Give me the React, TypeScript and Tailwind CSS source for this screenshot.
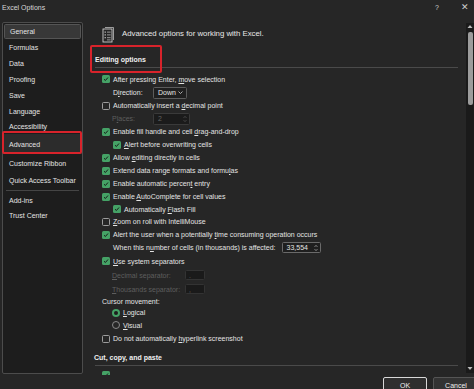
import type { ReactNode } from "react";

function Check({ on }: { on: boolean }) {
  if (!on) {
    return <span className="block h-[8px] w-[8px] shrink-0 rounded-[1.5px] border border-[#9c9c9c]" />;
  }
  return (
    <span className="flex h-[8px] w-[8px] shrink-0 items-center justify-center rounded-[1.5px] bg-[#45a266]">
      <svg width="6" height="6" viewBox="0 0 12 12" aria-hidden="true">
        <path d="M2 6.4 L4.8 9 L10 3" fill="none" stroke="#111" strokeWidth="1.8" />
      </svg>
    </span>
  );
}

function Radio({ on }: { on: boolean }) {
  return on ? (
    <span className="flex h-[8px] w-[8px] shrink-0 items-center justify-center rounded-full bg-[#45a266]">
      <span className="h-[4px] w-[4px] rounded-full bg-[#1d1d1d]" />
    </span>
  ) : (
    <span className="block h-[8px] w-[8px] shrink-0 rounded-full border border-[#8a8a8a]" />
  );
}

function Spin({ dim }: { dim?: boolean }) {
  const c = dim ? "#555" : "#aaa";
  return (
    <svg width="4" height="8" viewBox="0 0 4 8" aria-hidden="true" className="ml-auto mr-[2px]">
      <path d="M0.5 3 L2 1.3 L3.5 3" fill="none" stroke={c} strokeWidth="0.7" />
      <path d="M0.5 5 L2 6.7 L3.5 5" fill="none" stroke={c} strokeWidth="0.7" />
    </svg>
  );
}

// one line of the options list; heights follow the screenshot row spacing
function Row({ h, pl, children }: { h: string; pl: string; children: ReactNode }) {
  return <div className={`flex items-center gap-[3px] ${h} ${pl}`}>{children}</div>;
}

const navItems = [
  { label: "General", cls: "h-[15px] mx-[1px] mt-[1px] bg-[#383838] border border-[#555] rounded-[1.5px] pl-[5px]" },
  { label: "Formulas", cls: "h-[16px] pl-[6px]" },
  { label: "Data", cls: "h-[16px] pl-[6px]" },
  { label: "Proofing", cls: "h-[16px] pl-[6px]" },
  { label: "Save", cls: "h-[16px] pl-[6px]" },
  { label: "Language", cls: "h-[16px] pl-[6px]" },
  { label: "Accessibility", cls: "h-[15px] pl-[6px]" },
  { label: "Advanced", cls: "h-[20px] pl-[6px] bg-[#2c2c2c]" },
  { label: "Customize Ribbon", cls: "h-[18px] pl-[6px]" },
  { label: "Quick Access Toolbar", cls: "h-[17px] pl-[6px]" },
];

export default function App() {
  return (
    <div
      className="relative h-[389px] w-[474px] overflow-hidden bg-[#262626] text-[7px] leading-none text-[#e4e4e4]"
      style={{ fontFamily: '"Liberation Sans", Arial, sans-serif' }}
    >
      {/* Title bar */}
      <div className="flex h-[22px] items-start pt-[4px]">
        <span className="pl-[2px] text-[#d6d6d6]">Excel Options</span>
        <span className="ml-auto mr-[22px] text-[7px] text-[#cfcfcf]">?</span>
        <span className="mr-[5px] mt-[-1px] text-[9px] text-[#cfcfcf]">✕</span>
      </div>

      <div className="flex h-[353px]">
        {/* Left navigation */}
        <nav className="ml-[2px] h-[352px] w-[81px] shrink-0 rounded-[2px] border border-[#4c4c4c] bg-[#1d1d1d]">
          {navItems.map((item) => (
            <div key={item.label} className={`flex items-center ${item.cls}`}>
              {item.label}
            </div>
          ))}
          <div className="mx-[3px] my-[1px] h-px bg-[#454545]" />
          <div className="flex h-[16px] items-center pl-[6px]">Add-ins</div>
          <div className="flex h-[15px] items-center pl-[6px]">Trust Center</div>
        </nav>

        {/* Main options */}
        <main className="relative h-[353px] flex-1 overflow-hidden">
          <div className="flex h-[24px] items-center gap-[7px] pl-[19px]">
            <svg width="13" height="17" viewBox="0 0 13 17" aria-hidden="true">
              <path d="M3 1.5 H11.5 V14" fill="none" stroke="#bdbdbd" strokeWidth="0.8" />
              <rect x="1" y="3" width="9" height="13" fill="none" stroke="#cfcfcf" strokeWidth="0.9" />
              <rect x="2.6" y="5.5" width="1.2" height="1.2" fill="#cfcfcf" />
              <rect x="2.6" y="8.3" width="1.2" height="1.2" fill="#cfcfcf" />
              <rect x="2.6" y="11.1" width="1.2" height="1.2" fill="#cfcfcf" />
              <path d="M5 6.1 H8.6 M5 8.9 H8.6 M5 11.7 H8.6 M5 13.9 H8.6" stroke="#cfcfcf" strokeWidth="0.7" />
            </svg>
            <span className="text-[7.8px] text-[#e8e8e8]">Advanced options for working with Excel.</span>
          </div>

          <div className="mt-[6px] flex h-[14px] items-center pl-[12px] font-bold text-[#f0f0f0]">Editing options</div>
          <div className="ml-[12px] mr-[8px] mt-[1px] h-px bg-[#4a4a4a]" />

          <div className="mt-[4px]">
            <Row h="h-[14px]" pl="pl-[19px]">
              <Check on />
              <span>After pressing Enter, <u>m</u>ove selection</span>
            </Row>
            <Row h="h-[13px]" pl="pl-[30px]">
              <span className="w-[37px]">D<u>i</u>rection:</span>
              <span className="flex h-[12px] w-[34px] items-center rounded-[1.5px] border border-[#5c5c5c] bg-[#1f1f1f] pl-[4px]">
                Down
                <svg width="5" height="3" viewBox="0 0 5 3" className="ml-auto mr-[3px]" aria-hidden="true">
                  <path d="M0.5 0.5 L2.5 2.5 L4.5 0.5" fill="none" stroke="#cfcfcf" strokeWidth="0.8" />
                </svg>
              </span>
            </Row>
            <Row h="h-[13px]" pl="pl-[19px]">
              <Check on={false} />
              <span>Automatically insert a <u>d</u>ecimal point</span>
            </Row>
            <Row h="h-[13px]" pl="pl-[29px]">
              <span className="w-[38px] text-[#5e5e5e]">P<u>l</u>aces:</span>
              <span className="flex h-[12px] w-[37px] items-center rounded-[1.5px] border border-[#3a3a3a] bg-[#1b1b1b] pl-[4px] text-[#616161]">
                2
                <Spin dim />
              </span>
            </Row>
            <Row h="h-[13px]" pl="pl-[19px]">
              <Check on />
              <span>Enable fill handle and cell <u>d</u>rag-and-drop</span>
            </Row>
            <Row h="h-[13px]" pl="pl-[30px]">
              <Check on />
              <span><u>A</u>lert before overwriting cells</span>
            </Row>
            <Row h="h-[13px]" pl="pl-[19px]">
              <Check on />
              <span>Allow <u>e</u>diting directly in cells</span>
            </Row>
            <Row h="h-[13px]" pl="pl-[19px]">
              <Check on />
              <span>Extend data range formats and formu<u>l</u>as</span>
            </Row>
            <Row h="h-[13px]" pl="pl-[19px]">
              <Check on />
              <span>Enable automatic percen<u>t</u> entry</span>
            </Row>
            <Row h="h-[13px]" pl="pl-[19px]">
              <Check on />
              <span>Enable <u>A</u>utoComplete for cell values</span>
            </Row>
            <Row h="h-[12px]" pl="pl-[30px]">
              <Check on />
              <span>Automatically <u>F</u>lash Fill</span>
            </Row>
            <Row h="h-[13px]" pl="pl-[19px]">
              <Check on={false} />
              <span><u>Z</u>oom on roll with IntelliMouse</span>
            </Row>
            <Row h="h-[13px]" pl="pl-[19px]">
              <Check on />
              <span>Alert the user when a potentially <u>t</u>ime consuming operation occurs</span>
            </Row>
            <Row h="h-[13px]" pl="pl-[30px]">
              <span className="mr-[3px]">When this n<u>u</u>mber of cells (in thousands) is affected:</span>
              <span className="flex h-[11px] w-[39px] items-center rounded-[1.5px] border border-[#6a6a6a] bg-[#1f1f1f] pl-[4px]">
                33,554
                <Spin />
              </span>
            </Row>
            <Row h="h-[14px]" pl="pl-[19px]">
              <Check on />
              <span><u>U</u>se system separators</span>
            </Row>
            <Row h="h-[14px]" pl="pl-[29px]">
              <span className="w-[70px] text-[#5e5e5e]"><u>D</u>ecimal separator:</span>
              <span className="flex h-[10px] w-[20px] items-center rounded-[1.5px] border border-[#333] bg-[#1a1a1a] pl-[3px] text-[#5a5a5a]">.</span>
            </Row>
            <Row h="h-[14px]" pl="pl-[29px]">
              <span className="w-[70px] text-[#5e5e5e]"><u>T</u>housands separator:</span>
              <span className="flex h-[10px] w-[20px] items-center rounded-[1.5px] border border-[#333] bg-[#1a1a1a] pl-[3px] text-[#5a5a5a]">,</span>
            </Row>
            <Row h="h-[11px]" pl="pl-[19px]">
              <span>Cursor movement:</span>
            </Row>
            <Row h="h-[11px]" pl="pl-[29px]">
              <Radio on />
              <span><u>L</u>ogical</span>
            </Row>
            <Row h="h-[14px]" pl="pl-[29px]">
              <Radio on={false} />
              <span><u>V</u>isual</span>
            </Row>
            <Row h="h-[13px]" pl="pl-[19px]">
              <Check on={false} />
              <span>Do not automatically <u>h</u>yperlink screenshot</span>
            </Row>
          </div>

          <div className="mt-[5px] flex h-[14px] items-center pl-[11px] font-bold text-[#f0f0f0]">Cut, copy, and paste</div>
          <div className="ml-[12px] mr-[8px] mt-[1px] h-px bg-[#4a4a4a]" />
          <div className="mt-[5px] pl-[19px]">
            <Check on />
          </div>

          {/* annotation box around the section heading */}
          <div className="pointer-events-none absolute left-[7px] top-[23px] h-[28px] w-[72px] rounded-[2px] border-2 border-[#d8232b]" />
        </main>

        {/* Scrollbar */}
        <div className="mt-[1px] flex h-[350px] w-[8px] shrink-0 flex-col items-center bg-[#1a1a1a]">
          <svg width="6" height="5" viewBox="0 0 6 5" className="mt-[1px]" aria-hidden="true">
            <path d="M0.5 4 L3 1 L5.5 4 Z" fill="#bbb" />
          </svg>
          <div className="mt-[3px] h-[73px] w-[5px] rounded-[2px] bg-[#9c9c9c]" />
          <svg width="6" height="5" viewBox="0 0 6 5" className="mb-[2px] mt-auto" aria-hidden="true">
            <path d="M0.5 1 L3 4 L5.5 1 Z" fill="#bbb" />
          </svg>
        </div>
      </div>

      {/* Footer buttons */}
      <div className="flex gap-[6px] pl-[383px] pt-[2px]">
        <button type="button" className="flex h-[18px] w-[44px] shrink-0 justify-center rounded-[2px] border border-[#d8d8d8] bg-[#2f2f2f] pt-[4px] text-[7px] text-[#eee]">
          OK
        </button>
        <button type="button" className="flex h-[18px] w-[46px] shrink-0 justify-center rounded-[2px] border border-[#555] bg-[#333] pt-[4px] text-[7px] text-[#eee]">
          Cancel
        </button>
      </div>

      {/* annotation box around the Advanced tab */}
      <div className="pointer-events-none absolute left-[2px] top-[131px] h-[23px] w-[80px] rounded-[2px] border-2 border-[#d8232b]" />
    </div>
  );
}
